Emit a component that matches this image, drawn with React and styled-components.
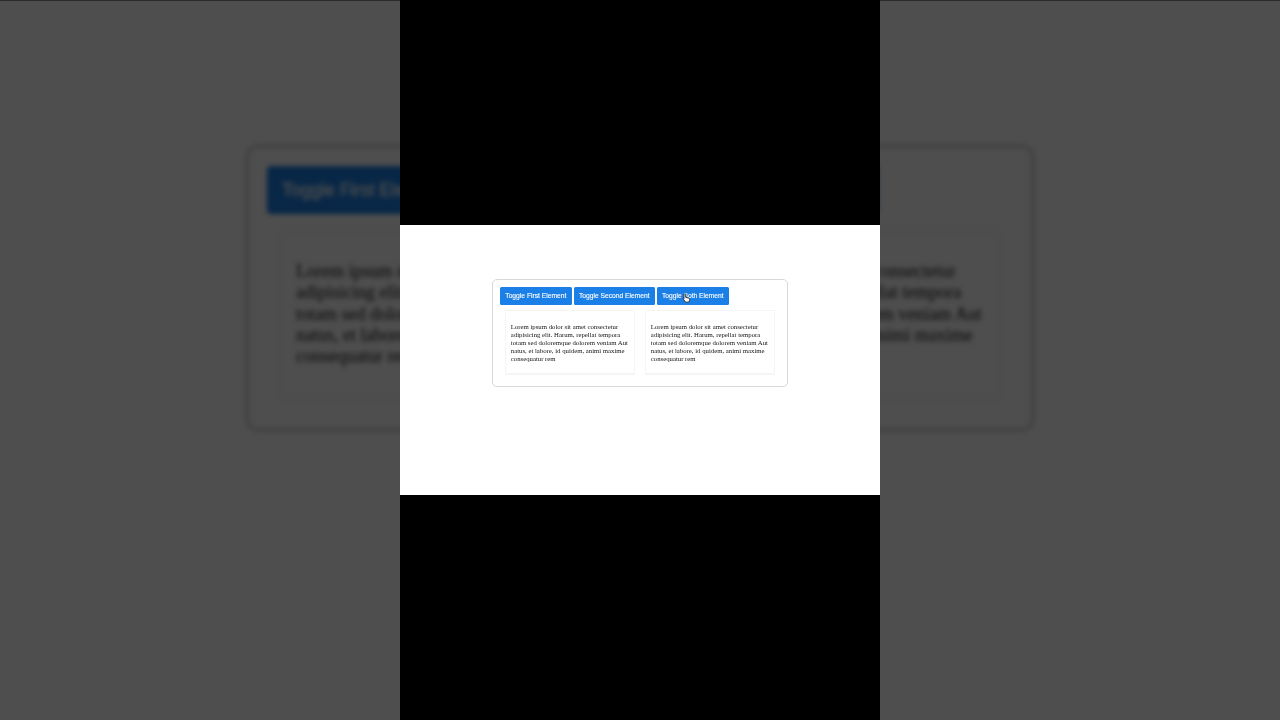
import React from "react";
import styled, { createGlobalStyle } from "styled-components";

const Global = createGlobalStyle`
  html, body { margin: 0; padding: 0; background: #4f4f4f; }
  * { box-sizing: border-box; }
`;

const Stage = styled.div`
  position: relative;
  width: 1280px;
  height: 720px;
  overflow: hidden;
  display: flex;
  justify-content: center;
  background: #4f4f4f;
`;

const Backdrop = styled.div`
  position: absolute;
  inset: 0;
  filter: blur(2.4px) brightness(0.305);
  background: #fff;
`;

const TopEdge = styled.div`
  position: absolute;
  inset: 0 0 auto 0;
  height: 1px;
  background: #2b2b2b;
`;

const Portrait = styled.div`
  position: relative;
  width: 480px;
  height: 720px;
  background: #000;
  display: flex;
  align-items: center;
`;

const Screen = styled.div`
  position: relative;
  zoom: ${(p) => p.$zoom};
  width: 480px;
  height: 270px;
  padding: 54px 92px 0;
  background: #fff;
  filter: ${(p) => (p.$zoom === 1 ? "blur(0.4px)" : "none")};
`;

const Card = styled.div`
  width: 296px;
  height: 108px;
  padding: 6.8px 6.8px 0;
  border: 1.7px solid #d8d8d8;
  border-radius: 5px;
`;

const Toolbar = styled.div`
  display: flex;
  gap: 2px;
`;

const ToggleButton = styled.div`
  height: 18px;
  width: ${(p) => p.$w}px;
  padding-top: 0.6px;
  display: flex;
  align-items: center;
  justify-content: center;
  background: #1a7fe6;
  border-radius: 1.5px;
  color: #fff;
  font: 6.7px/1 "Liberation Sans", Arial, sans-serif;
  -webkit-text-stroke: 0.12px #fff;
  white-space: nowrap;
`;

const Panels = styled.div`
  display: flex;
  gap: 10px;
  margin: 5.5px 0 0 4.8px;
`;

const Panel = styled.div`
  width: 130px;
  height: 64px;
  padding: 11.3px 2px 0 5.2px;
  border: 1px solid #f5f5f5;
  box-shadow: 0 0.5px 0.5px #f6f6f6;
  color: #151515;
  font: 6.75px/8px "Liberation Serif", "Times New Roman", serif;
`;

const Cursor = styled.svg`
  position: absolute;
  left: 282px;
  top: 68px;
  width: 9px;
  height: 10px;
`;

const LOREM =
  "Lorem ipsum dolor sit amet consectetur adipisicing elit. Harum, repellat tempora totam sed doloremque dolorem veniam Aut natus, et labore, id quidem, animi maxime consequatur rem";

const Demo = ({ zoom, cursor }) => (
  <Screen $zoom={zoom}>
    <Card>
      <Toolbar>
        <ToggleButton $w={72}>Toggle First Element</ToggleButton>
        <ToggleButton $w={81}>Toggle Second Element</ToggleButton>
        <ToggleButton $w={72}>Toggle Both Element</ToggleButton>
      </Toolbar>
      <Panels>
        <Panel>{LOREM}</Panel>
        <Panel>{LOREM}</Panel>
      </Panels>
    </Card>
    {cursor && (
      <Cursor viewBox="0 0 16 18">
        <path
          d="M5 1.5c1 0 1.6.7 1.6 1.6V8l5 1c1.3.3 2 1.2 2 2.4 0 1.6-.6 3.6-1.6 5.1H6.2L2.3 11c-.7-1 .6-2.2 1.6-1.3l-.5-.2V3.1C3.4 2.2 4 1.5 5 1.5z"
          fill="#fff"
          stroke="#333"
          strokeWidth="1.8"
        />
      </Cursor>
    )}
  </Screen>
);

export default function App() {
  return (
    <Stage>
      <Global />
      <Backdrop>
        <Demo zoom={8 / 3} />
      </Backdrop>
      <TopEdge />
      <Portrait>
        <Demo zoom={1} cursor />
      </Portrait>
    </Stage>
  );
}
